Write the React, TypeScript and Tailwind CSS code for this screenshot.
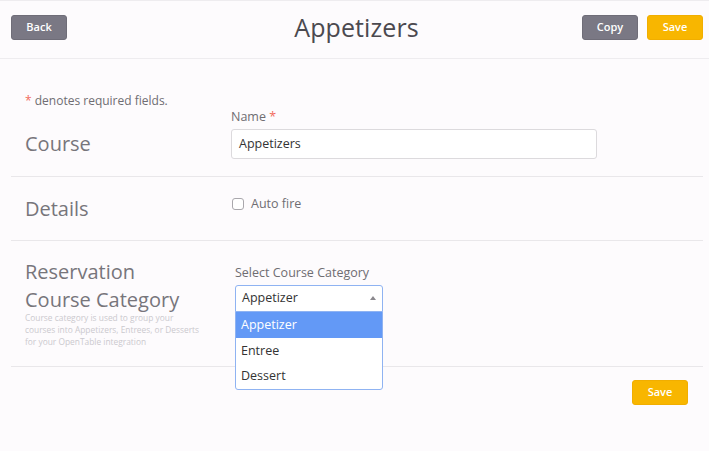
import React from "react"

function Button({ label, tone }: { label: string; tone: "gray" | "yellow" }) {
  const color =
    tone === "gray"
      ? "bg-[#7a7884] border-[#6f6d78]"
      : "bg-[#f8b600] border-[#f1ae00]"
  return (
    <button
      className={`${color} w-[56px] h-[25px] rounded-[3px] border text-white text-[11px] font-semibold flex items-center justify-center`}
    >
      {label}
    </button>
  )
}

export default function App() {
  return (
    <div className="w-[709px] h-[451px] bg-[#fdfbfd] font-['Open_Sans',sans-serif] text-[#4a484e] overflow-hidden">
      {/* Header */}
      <div className="h-[59px] border-t border-b border-[#eeecef] grid grid-cols-[1fr_auto_1fr] items-center px-[11px] pb-[4px]">
        <div>
          <Button label="Back" tone="gray" />
        </div>
        <h1 className="text-[25px] font-medium text-[#4b494f] ml-[4px] tracking-[0.1px]">Appetizers</h1>
        <div className="flex justify-end gap-[9px] mr-[-5px]">
          <Button label="Copy" tone="gray" />
          <Button label="Save" tone="yellow" />
        </div>
      </div>

      <div className="px-[11px] pr-[6px]">
        {/* Course */}
        <div className="border-b border-[#e9e7ea] pt-[34px] pb-[17px]">
          <p className="pl-[14px] text-[12px] leading-[16px] text-[#6f6d72]">
            <span className="text-[#f26b5e]">*</span> denotes required fields.
          </p>
          <div className="grid grid-cols-[220px_366px]">
            <div className="pl-[14px] self-end mb-[1px] text-[20px] leading-[28px] text-[#77757b]">Course</div>
            <div>
              <label className="block text-[12.5px] leading-[16px] text-[#6f6d72] mb-[4px]">
                Name <span className="text-[#f26b5e]">*</span>
              </label>
              <div className="h-[30px] border border-[#dcdadd] rounded-[3px] bg-white flex items-center px-[7px] text-[12.5px] text-[#333]">
                Appetizers
              </div>
            </div>
          </div>
        </div>

        {/* Details */}
        <div className="border-b border-[#e9e7ea] pt-[18px] pb-[17px] grid grid-cols-[220px_1fr]">
          <div className="pl-[14px] text-[20px] leading-[28px] text-[#77757b]">Details</div>
          <label className="flex items-center gap-[7px] h-[16px] mt-[1px] text-[12.5px] text-[#6f6d72]">
            <span className="w-[12px] h-[12px] ml-[1px] rounded-[3px] border border-[#a9a7ac] bg-white" />
            Auto fire
          </label>
        </div>

        {/* Reservation Course Category */}
        <div className="border-b border-[#e9e7ea] h-[126px] pt-[17px] grid grid-cols-[224px_1fr]">
          <div className="pl-[14px]">
            <div className="text-[20px] leading-[28px] text-[#77757b]">
              Reservation
              <br />
              Course Category
            </div>
            <p className="-mt-[2px] text-[8.4px] leading-[12px] text-[#cbc9ce]">
              Course category is used to group your
              <br />
              courses into Appetizers, Entrees, or Desserts
              <br />
              for your OpenTable integration
            </p>
          </div>
          <div className="pt-[7px]">
            <label className="block text-[12.5px] leading-[16px] text-[#6f6d72] mb-[4px]">Select Course Category</label>
            <div className="relative w-[148px]">
              <div className="h-[27px] border border-[#8fb3f2] rounded-t-[3px] bg-white flex items-center justify-between pl-[6px] pr-[6px] text-[12.5px] text-[#333]">
                Appetizer
                <svg width="6" height="4" viewBox="0 0 6 4" className="mb-[1px]">
                  <path d="M0 4 L3 0 L6 4 Z" fill="#8a888d" />
                </svg>
              </div>
              <div className="absolute left-0 top-[26px] w-[148px] bg-white border border-[#8fb3f2] rounded-b-[3px] text-[12.5px] text-[#333] z-10">
                <div className="h-[26px] flex items-center px-[5px] bg-[#6399f6] text-white">Appetizer</div>
                <div className="h-[26px] flex items-center px-[5px]">Entree</div>
                <div className="h-[25px] flex items-center px-[5px]">Dessert</div>
              </div>
            </div>
          </div>
        </div>

        {/* Footer */}
        <div className="flex justify-end pt-[13px] pr-[15px]">
          <Button label="Save" tone="yellow" />
        </div>
      </div>
    </div>
  )
}
